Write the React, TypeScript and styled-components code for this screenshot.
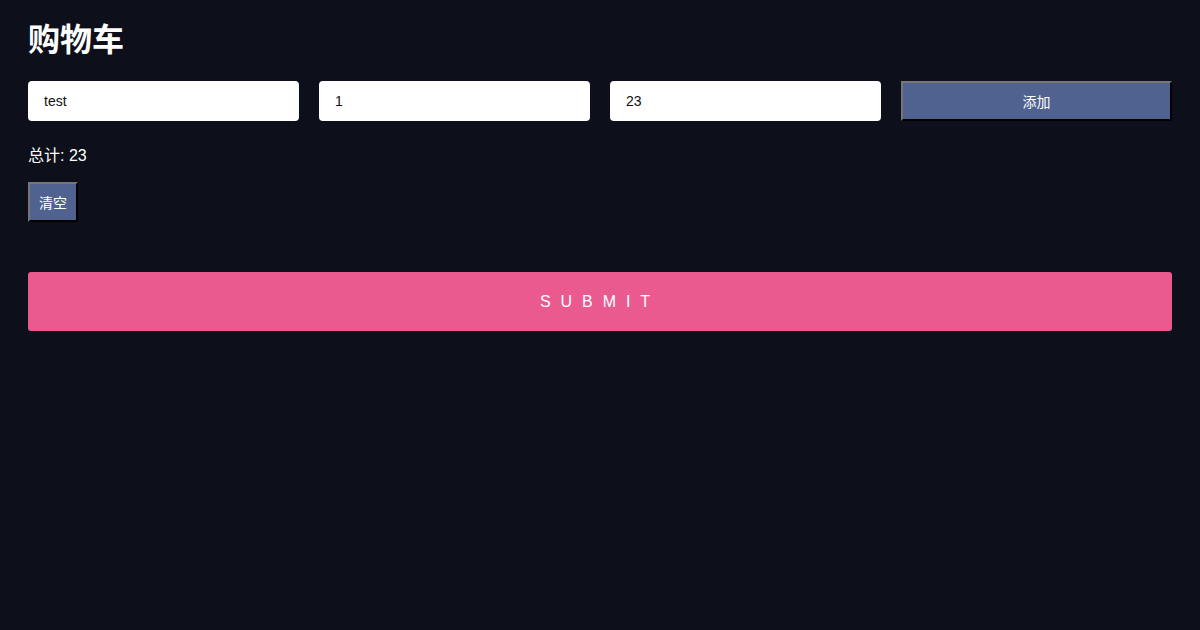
import styled, { createGlobalStyle } from "styled-components";

const GlobalStyle = createGlobalStyle`
  html, body {
    margin: 0;
    background: #0d0f1a;
  }
  body {
    font-family: "Liberation Sans", "Noto Sans CJK SC", sans-serif;
    color: #ffffff;
  }
`;

const Page = styled.main`
  padding: 22px 28px;
`;

const Title = styled.h1`
  margin: 0 0 22px;
  font-size: 32px;
  line-height: 37px;
  font-weight: 700;
`;

const FormRow = styled.div`
  display: grid;
  grid-template-columns: repeat(4, 1fr);
  gap: 20px;
`;

const Field = styled.input`
  box-sizing: border-box;
  height: 40px;
  padding: 0 16px;
  border: none;
  border-radius: 4px;
  background: #ffffff;
  color: #111111;
  font: 14px "Liberation Sans", sans-serif;
  outline: none;
`;

const ActionButton = styled.button<{ $wide?: boolean }>`
  box-sizing: border-box;
  height: 40px;
  padding: 0 ${(p) => (p.$wide ? "0" : "9px")};
  border: 2px outset #767676;
  border-right-color: #222222;
  border-bottom-color: #222222;
  background: #4f6290;
  color: #ffffff;
  font: 14px "Liberation Sans", "Noto Sans CJK SC", sans-serif;
  cursor: pointer;
`;

const Total = styled.p`
  margin: 23px 0 14px;
  font-size: 16px;
  line-height: 24px;
`;

const SubmitButton = styled.button`
  display: block;
  width: 100%;
  height: 59px;
  margin-top: 50px;
  border: none;
  border-radius: 3px;
  background: #eb5a8f;
  color: #ffffff;
  font: 16px "Liberation Sans", sans-serif;
  letter-spacing: 0.62em;
  text-transform: uppercase;
  cursor: pointer;
`;

export default function App() {
  return (
    <>
      <GlobalStyle />
      <Page>
        <Title>购物车</Title>
        <FormRow>
          <Field defaultValue="test" />
          <Field defaultValue="1" />
          <Field defaultValue="23" />
          <ActionButton $wide>添加</ActionButton>
        </FormRow>
        <Total>总计: 23</Total>
        <ActionButton>清空</ActionButton>
        <SubmitButton>Submit</SubmitButton>
      </Page>
    </>
  );
}
